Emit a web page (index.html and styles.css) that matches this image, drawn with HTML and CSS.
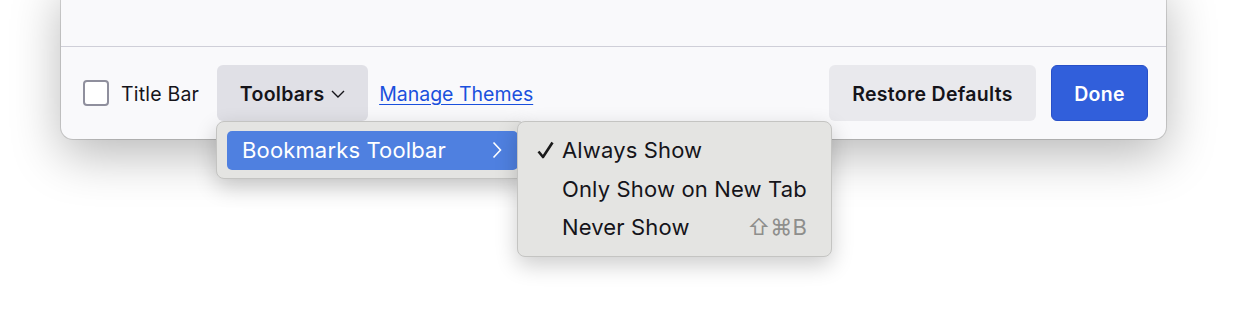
FILE: index.html
```html
<!DOCTYPE html>
<html lang="en">
<head>
    <meta charset="UTF-8">
    <title>Customize Toolbar</title>
    <link rel="stylesheet" href="styles.css">
</head>
<body>
    <div class="window">
        <div class="palette"></div>
        <div class="footer">
            <label class="titlebar">
                <span class="checkbox"></span>
                <span>Title Bar</span>
            </label>
            <button class="btn toolbars">Toolbars
                <svg class="chev-down" width="14" height="8" viewBox="0 0 14 8"><path d="M1 1l6 6 6-6" fill="none" stroke="#15141a" stroke-width="1.4"/></svg>
            </button>
            <a class="themes" href="#">Manage Themes</a>
            <div class="spacer"></div>
            <button class="btn restore">Restore Defaults</button>
            <button class="btn done">Done</button>
        </div>
    </div>

    <div class="menu menu-main">
        <div class="menu-item active">
            <span>Bookmarks Toolbar</span>
            <svg width="10" height="18" viewBox="0 0 10 18"><path d="M1.5 1.5l7 7.5-7 7.5" fill="none" stroke="#fff" stroke-width="1.6"/></svg>
        </div>
    </div>

    <div class="menu menu-sub">
        <div class="menu-item">
            <span class="check"><svg width="17" height="18" viewBox="0 0 17 18"><path d="M1.5 10.5l4.5 5.5L15.5 1.5" fill="none" stroke="#1a1a1a" stroke-width="2.6" stroke-linejoin="round"/></svg></span>
            <span>Always Show</span>
        </div>
        <div class="menu-item"><span class="check"></span><span>Only Show on New Tab</span></div>
        <div class="menu-item"><span class="check"></span><span>Never Show</span><span class="shortcut">⇧⌘B</span></div>
    </div>
</body>
</html>
```

FILE: styles.css
```css
body {
    margin: 0;
    background: #ffffff;
    font-family: "Inter", "Noto Sans", sans-serif;
    color: #15141a;
    height: 319px;
    overflow: hidden;
}

.window {
    margin: -20px 0 0 61px;
    width: 1105px;
    background: #f9f9fb;
    border-radius: 0 0 12px 12px;
    box-shadow: 0 0 0 1px rgba(0,0,0,0.14), 0 16px 50px rgba(0,0,0,0.28);
}

.palette {
    height: 66px;
    border-bottom: 1px solid #cfcfd8;
}

.footer {
    display: flex;
    align-items: center;
    padding: 18px 18px 18px 22px;
}

.titlebar {
    display: flex;
    align-items: center;
    gap: 12px;
    font-size: 19.5px;
    letter-spacing: 0.2px;
    margin-right: 18px;
    padding-top: 2px;
}

.checkbox {
    width: 22px;
    height: 22px;
    margin-top: -2px;
    border: 2.5px solid #8f8f9d;
    border-radius: 4px;
    background: #fff;
}

.btn {
    font-family: inherit;
    font-size: 19.5px;
    font-weight: 600;
    letter-spacing: 0.3px;
    height: 56px;
    padding-top: 3px;
    border: none;
    border-radius: 6px;
    color: #15141a;
}

.toolbars {
    width: 151px;
    background: #e0e0e6;
    display: flex;
    align-items: center;
    justify-content: center;
    gap: 7px;
}

.themes {
    margin-left: 11px;
    padding-top: 2px;
    font-size: 19.5px;
    color: #1a50dd;
    text-underline-offset: 3px;
}

.spacer {
    flex: 1;
}

.restore {
    width: 207px;
    background: #e9e9ed;
}

.done {
    width: 97px;
    margin-left: 15px;
    background: #315fdb;
    color: #fff;
    border: 1px solid #2850c8;
}

.menu {
    position: absolute;
    background: #e4e4e2;
    border: 1px solid #c4c4c2;
    border-radius: 8px;
    box-shadow: 0 8px 22px rgba(0,0,0,0.2);
    padding: 9px;
    box-sizing: border-box;
    font-size: 22px;
    letter-spacing: 0.15px;
    white-space: nowrap;
}

.menu-main {
    left: 216px;
    top: 121px;
    width: 310px;
    height: 58px;
}

.menu-sub {
    left: 517px;
    top: 121px;
    width: 315px;
    padding: 9px 8px;
}

.menu-item {
    height: 38.5px;
    display: flex;
    align-items: center;
    padding: 0 16px;
    border-radius: 5px;
}

.menu-main .menu-item {
    width: 291px;
    box-sizing: border-box;
    justify-content: space-between;
    padding: 0 16px 0 15px;
    margin-left: 1px;
}

.active {
    background: #4f80e0;
    color: #fff;
}

.menu-sub .menu-item {
    padding: 0 16px 0 11px;
}

.check {
    width: 25px;
    flex: none;
    display: flex;
    align-items: center;
}

.shortcut {
    margin-left: auto;
    color: #8e8e8c;
}
```
